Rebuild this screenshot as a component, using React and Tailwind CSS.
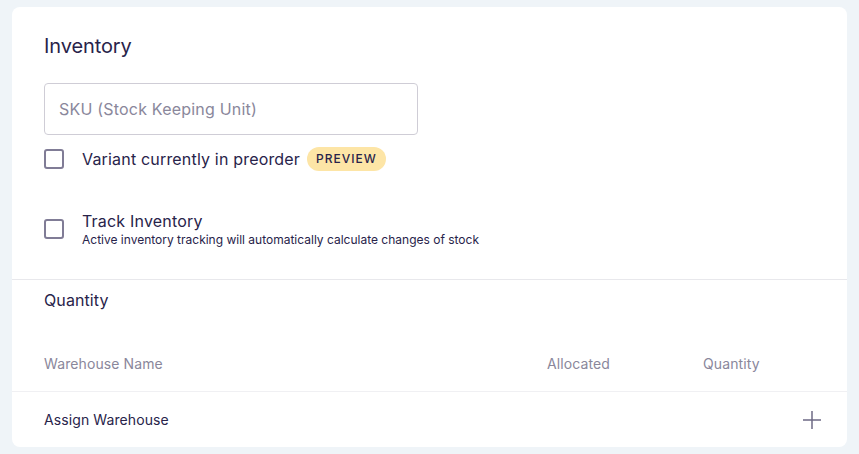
import React from 'react';

const Checkbox = () => (
  <span className="block w-[20px] h-[20px] shrink-0 rounded-[3px] border-2 border-[#807c96] bg-white" />
);

export default function App() {
  return (
    <div className="min-h-[454px] bg-[#eff4f8] px-[12px] pt-[7px] pb-[7px] font-['Inter',sans-serif] text-[#28234a]">
      <div className="bg-white rounded-[8px] overflow-hidden">
        <div className="px-[32px] pt-[27px]">
          <h2 className="text-[20px] leading-[24px] font-normal tracking-[-0.1px]">Inventory</h2>
          <div className="mt-[25px] w-[374px] h-[52px] rounded-[4px] border border-[#cfcdd6] flex items-center px-[14px]">
            <span className="text-[16px] tracking-[0.2px] text-[#8a879b]">SKU (Stock Keeping Unit)</span>
          </div>
          <div className="mt-[12px] flex items-center h-[24px]">
            <Checkbox />
            <span className="ml-[18px] text-[16px] leading-[20px] tracking-[0.18px]">Variant currently in preorder</span>
            <span className="ml-[7px] h-[24px] px-[9px] rounded-full bg-[#fde5a6] text-[12px] font-medium tracking-[1px] flex items-center text-[#28234a]">PREVIEW</span>
          </div>
          <div className="mt-[39px] flex items-start">
            <div className="pt-[9px]">
              <Checkbox />
            </div>
            <div className="ml-[18px] flex flex-col">
              <span className="text-[16px] leading-[22px] tracking-[0.2px]">Track Inventory</span>
              <span className="text-[12px] leading-[16px]">Active inventory tracking will automatically calculate changes of stock</span>
            </div>
          </div>
        </div>
        <div className="mt-[31px] border-t border-[#e8e8ec]" />
        <div className="px-[32px] pt-[10px] pb-[25px]">
          <span className="block text-[16px] leading-[20px] tracking-[0.1px]">Quantity</span>
        </div>
        <div className="flex items-center h-[56px] pl-[32px] pr-[40px] text-[14px] text-[#8a879b] tracking-[0.1px]">
          <span className="flex-1">Warehouse Name</span>
          <span className="w-[156px]">Allocated</span>
          <span className="w-[104px]">Quantity</span>
        </div>
        <div className="border-t border-[#f0f0f3]" />
        <div className="flex items-center justify-between h-[55px] pl-[32px] pr-[26px]">
          <span className="text-[14px] tracking-[0.1px]">Assign Warehouse</span>
          <svg width="18" height="18" viewBox="0 0 18 18" fill="none" stroke="#6e6a85" strokeWidth="1.5">
            <path d="M9 0v18M0 9h18" />
          </svg>
        </div>
      </div>
    </div>
  );
}
